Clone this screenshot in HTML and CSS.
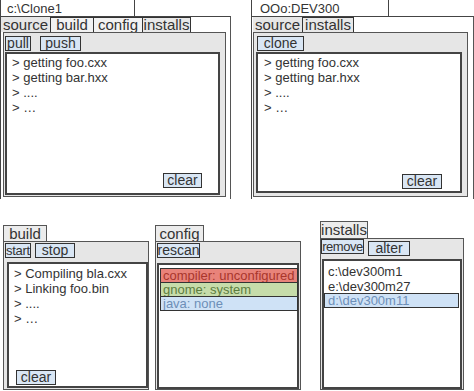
FILE: index.html
```html
<!DOCTYPE html>
<html>
<head>
<meta charset="utf-8">
<title>Clone manager mockup</title>
<link rel="stylesheet" href="styles.css">
</head>
<body>
<div class="desk">
  <div class="top-row">
    <section class="win win-a">
      <div class="title">c:\Clone1</div>
      <div class="frame">
        <div class="tabs">
          <span class="tab active t-src">source</span>
          <span class="tab t-build">build</span>
          <span class="tab t-config">config</span>
          <span class="tab t-inst">installs</span>
        </div>
        <div class="panel">
          <div class="btns">
            <span class="btn b-pull">pull</span>
            <span class="btn b-push">push</span>
          </div>
          <div class="area">
            <div class="line">&gt; getting foo.cxx</div>
            <div class="line">&gt; getting bar.hxx</div>
            <div class="line">&gt; ....</div>
            <div class="line">&gt; …</div>
            <span class="btn clear">clear</span>
          </div>
        </div>
      </div>
    </section>

    <section class="win win-b">
      <div class="title">OOo:DEV300</div>
      <div class="frame">
        <div class="tabs">
          <span class="tab active t-src">source</span>
          <span class="tab t-inst2">installs</span>
        </div>
        <div class="panel">
          <div class="btns">
            <span class="btn b-clone">clone</span>
          </div>
          <div class="area">
            <div class="line">&gt; getting foo.cxx</div>
            <div class="line">&gt; getting bar.hxx</div>
            <div class="line">&gt; ....</div>
            <div class="line">&gt; …</div>
            <span class="btn clear">clear</span>
          </div>
        </div>
      </div>
    </section>
  </div>

  <div class="bottom-row">
    <section class="bpanel bp-build">
      <span class="btab">build</span>
      <div class="bbody">
        <div class="btns">
          <span class="btn b-start">start</span>
          <span class="btn b-stop">stop</span>
        </div>
        <div class="area">
          <div class="line">&gt; Compiling bla.cxx</div>
          <div class="line">&gt; Linking foo.bin</div>
          <div class="line">&gt; ....</div>
          <div class="line">&gt; …</div>
          <span class="btn clear">clear</span>
        </div>
      </div>
    </section>

    <section class="bpanel bp-config">
      <span class="btab">config</span>
      <div class="bbody">
        <div class="btns">
          <span class="btn b-rescan">rescan</span>
        </div>
        <div class="area">
          <div class="row row-red">compiler: unconfigured</div>
          <div class="row row-green">gnome: system</div>
          <div class="row row-blue">java: none</div>
        </div>
      </div>
    </section>

    <section class="bpanel bp-inst">
      <span class="btab">installs</span>
      <div class="bbody">
        <div class="btns">
          <span class="btn b-remove">remove</span>
          <span class="btn b-alter">alter</span>
        </div>
        <div class="area">
          <div class="line">c:\dev300m1</div>
          <div class="line">e:\dev300m27</div>
          <div class="row row-blue">d:\dev300m11</div>
        </div>
      </div>
    </section>
  </div>
</div>
</body>
</html>
```

FILE: styles.css
```css
* { box-sizing: border-box; }

html, body {
  margin: 0;
  padding: 0;
  background: #ffffff;
}

body {
  font-family: "Liberation Sans", Arial, sans-serif;
  color: #333333;
  width: 474px;
  height: 391px;
  overflow: hidden;
}

.desk {
  display: flex;
  flex-direction: column;
}

/* ---------- top windows ---------- */
.top-row {
  display: flex;
  height: 199px;
  gap: 20px;
}

.win {
  display: flex;
  flex-direction: column;
}

.win-a { width: 231px; }
.win-b { width: 223px; }

.title {
  height: 16px;
  border-left: 1px solid #444;
  border-right: 1px solid #444;
  font-size: 13px;
  line-height: 17px;
  padding-left: 6px;
  color: #333;
}
.win-a .title { width: 135px; }
.win-b .title { width: 138px; padding-left: 8px; }

.frame {
  flex: 1;
  border-top: 1px solid #444;
  border-left: 1px solid #444;
  border-right: 1px solid #555;
  display: flex;
  flex-direction: column;
}

.tabs {
  display: flex;
  height: 15px;
}
.win-b .tabs { padding-left: 1px; }

.tab {
  font-size: 15px;
  line-height: 14px;
  height: 15px;
  border: 1px solid #333;
  border-bottom: none;
  background: #f2f2f2;
  text-align: center;
  white-space: nowrap;
  overflow: hidden;
  color: #333;
}
.tab + .tab { margin-left: -1px; }
.tab.active {
  background: #e6e6e6;
  border-color: transparent;
  border-right-color: #333;
  text-align: left;
  padding-left: 1px;
}
.t-src { width: 50px; }
.t-build { width: 44px; }
.t-config { width: 50px; }
.t-inst { width: 49px; background: #e8e8e8; }
.t-inst2 { width: 52px; background: #e8e8e8; }

.panel {
  height: 165px;
  background: #e6e6e6;
  border: 1px solid #555;
  display: flex;
  flex-direction: column;
}
.win-a .panel { margin-left: 2px; width: 223px; }
.win-b .panel { margin-left: 1px; width: 215px; }

.btns {
  display: flex;
  align-items: flex-start;
  height: 15px;
}
.win-a .btns { margin: 3px 0 1px 1px; gap: 9px; }
.win-b .btns { margin: 3px 0 1px 3px; }

.area {
  flex: 1;
  background: #ffffff;
  border: 2px solid #444;
  display: flex;
  flex-direction: column;
  font-size: 13px;
  line-height: 15px;
  color: #333;
}
.win-a .area { margin: 0 0 1px 1px; width: 215px; padding: 1px 0 0 5px; }
.win-b .area { margin: 0 0 3px 2px; width: 206px; padding: 1px 0 0 6px; }

.line { white-space: nowrap; height: 15px; }

/* ---------- buttons ---------- */
.btn {
  display: flex;
  justify-content: center;
  align-items: center;
  height: 15px;
  border: 1px solid #333;
  background: #d9e6f4;
  font-size: 14px;
  line-height: 13px;
  color: #333;
  white-space: nowrap;
  overflow: hidden;
  flex: none;
}
.b-pull { width: 26px; }
.b-push { width: 41px; }
.b-clone { width: 47px; }
.b-start { width: 26px; font-size: 13px; letter-spacing: -0.3px; }
.b-stop { width: 40px; }
.b-rescan { width: 43px; }
.b-remove { width: 43px; font-size: 13px; letter-spacing: -0.45px; }
.b-alter { width: 42px; margin-top: 2px; }

.clear {
  margin-top: auto;
  align-self: flex-end;
  width: 39px;
}
.win-a .clear { margin-right: 16px; margin-bottom: 5px; }
.win-b .clear { width: 40px; margin-right: 18px; margin-bottom: 2px; }

/* ---------- bottom panels ---------- */
.bottom-row {
  display: flex;
  align-items: flex-end;
  height: 169px;
  margin-top: 22px;
}

.bpanel {
  display: flex;
  flex-direction: column;
}
.bp-build { margin-left: 3px; width: 146px; height: 165px; }
.bp-config { margin-left: 6px; width: 146px; height: 165px; }
.bp-inst { margin-left: 19px; width: 144px; height: 169px; }

.btab {
  align-self: flex-start;
  height: 16px;
  font-size: 15px;
  line-height: 16px;
  background: #ececec;
  border: 1px solid #555;
  border-bottom: none;
  text-align: center;
  color: #333;
}
.bp-build .btab { width: 44px; }
.bp-config .btab { width: 49px; }
.bp-inst .btab { width: 48px; height: 17px; }

.bbody {
  flex: 1;
  background: #e6e6e6;
  border: 1px solid #555;
  display: flex;
  flex-direction: column;
}

.bp-build .btns { margin: 1px 0 4px 1px; gap: 4px; }
.bp-build .area { margin: 0 0 1px 3px; padding: 2px 0 0 5px; }
.bp-build .clear { align-self: flex-start; width: 40px; margin: auto 0 1px 2px; }

.bp-config .btns { margin: 1px 0 5px 1px; }
.bp-config .area { margin: 0 0 0 1px; width: 142px; padding: 3px 0 0 1px; }

.bp-inst .btns { margin: 0 0 5px 0; gap: 4px; align-items: flex-start; }
.bp-inst .area { margin: 0 0 0 1px; width: 140px; padding: 3px 0 0 4px; }

/* ---------- list rows ---------- */
.row {
  height: 15px;
  border: 1px solid #333;
  font-size: 13px;
  line-height: 13px;
  padding-left: 2px;
  white-space: nowrap;
  overflow: hidden;
}
.row + .row { margin-top: -1px; }
.row-red { background: #e8837a; color: #a8362c; }
.row-green { background: #c6dcaa; color: #5d7d3f; }
.row-blue { background: #cfe2f6; color: #6d8fb8; }

.bp-config .row { width: 138px; }
.bp-inst .row { margin-left: -4px; width: 135px; padding-left: 3px; margin-top: -1px; }
```
